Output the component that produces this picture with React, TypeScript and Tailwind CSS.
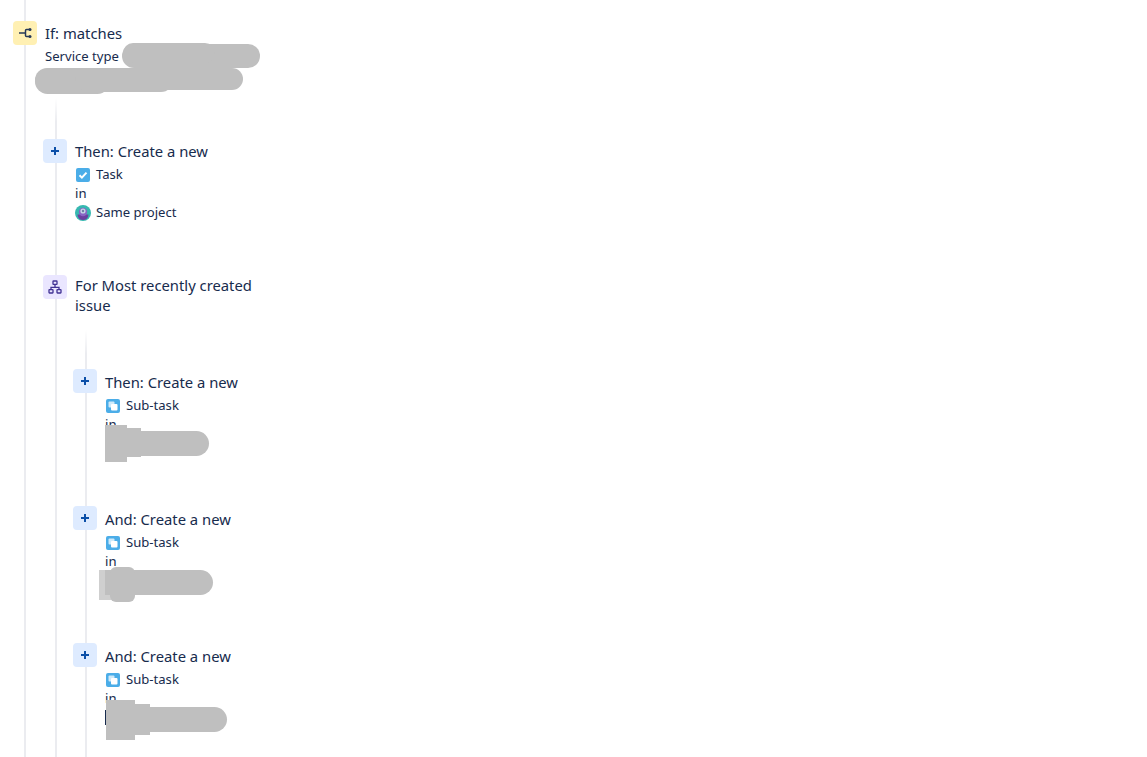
import type { ReactNode } from "react";

function Tile({ bg, children }: { bg: string; children: ReactNode }) {
  return (
    <div className={`flex h-6 w-6 shrink-0 items-center justify-center rounded-[4px] ${bg}`}>
      {children}
    </div>
  );
}

const BranchIcon = () => (
  <svg width="16" height="16" viewBox="0 0 16 16" fill="none" stroke="#253858" strokeWidth="1.500">
    <path d="M2 8h6.500M8.500 8V5.500c0-.7.3-1 1-1h3M8.500 8v2.500c0 .7.3 1 1 1h3" />
    <circle cx="13" cy="4.500" r="1.500" fill="#253858" stroke="none" />
    <circle cx="13" cy="11.500" r="1.500" fill="#253858" stroke="none" />
  </svg>
);

const PlusIcon = () => (
  <svg width="16" height="16" viewBox="0 0 16 16" fill="none" stroke="#0b4fa8" strokeWidth="2">
    <path d="M8 4v8M4 8h8" />
  </svg>
);

const HierarchyIcon = () => (
  <svg width="16" height="16" viewBox="0 0 16 16" fill="none" stroke="#403294" strokeWidth="1.300">
    <rect x="6" y="2" width="4" height="3.400" rx="0.500" />
    <rect x="2" y="10.600" width="4" height="3.400" rx="0.500" />
    <rect x="10" y="10.600" width="4" height="3.400" rx="0.500" />
    <path d="M8 5.400v3M4 10.600V8.400h8v2.200" />
  </svg>
);

const TaskIcon = () => (
  <svg width="14" height="14" viewBox="0 0 14 14" className="ml-px shrink-0">
    <rect width="14" height="14" rx="2" fill="#4bade8" />
    <path d="M3.500 7.200l2.400 2.400 4.600-5" fill="none" stroke="#fff" strokeWidth="2" />
  </svg>
);

const SubtaskIcon = () => (
  <svg width="14" height="14" viewBox="0 0 14 14" className="ml-px shrink-0">
    <rect width="14" height="14" rx="2" fill="#4bade8" />
    <rect x="2.500" y="2.500" width="6" height="6" rx="1" fill="#cfeafa" />
    <rect x="5" y="5" width="6.500" height="6.500" rx="1" fill="#fff" />
  </svg>
);

const ProjectIcon = () => (
  <svg width="16" height="16" viewBox="0 0 16 16" className="shrink-0">
    <circle cx="8" cy="8" r="8" fill="#36b8b0" />
    <path d="M2.500 9.500a5.500 5.500 0 0 0 11 0z" fill="#6b3fa0" />
    <circle cx="8" cy="7" r="4.200" fill="#8a63c4" />
    <circle cx="8" cy="6" r="2.600" fill="#c5d6e8" />
    <circle cx="8" cy="6" r="1.200" fill="#6f7fa8" />
  </svg>
);

function Node({
  tile,
  title,
  top = "mt-[2px]",
  children,
}: {
  tile: ReactNode;
  title: ReactNode;
  top?: string;
  children?: ReactNode;
}) {
  return (
    <div className="-ml-[14px] flex gap-2">
      {tile}
      <div className={`w-[190px] text-[14.800px] leading-5 ${top}`}>
        {title}
        {children && <div className="mt-1 flex flex-col">{children}</div>}
      </div>
    </div>
  );
}

function TypeRow({ icon, label }: { icon: ReactNode; label: string }) {
  return (
    <div className="flex h-[19px] items-center gap-[6px] text-[13.100px] leading-[19px]">
      {icon}
      <span>{label}</span>
    </div>
  );
}

function InRow() {
  return <div className="h-[19px] text-[13.100px] leading-[19px]">in</div>;
}

function Blob({ className }: { className: string }) {
  return <div className={`absolute bg-[#bfbfbf] ${className}`} />;
}

function CreateNode({ verb, blobs }: { verb: string; blobs: ReactNode }) {
  return (
    <Node tile={<Tile bg="bg-[#deebff]"><PlusIcon /></Tile>} title={`${verb}: Create a new`} top="mt-[3px]">
      <TypeRow icon={<SubtaskIcon />} label="Sub-task" />
      <InRow />
      <div className="relative h-5">{blobs}</div>
    </Node>
  );
}

function Fade() {
  return <div className="absolute -left-[2px] top-0 h-6 w-[2px] bg-gradient-to-b from-white to-transparent" />;
}

export default function App() {
  return (
    <div className="h-[757px] overflow-hidden bg-white text-[#172b4d] [font-family:'Noto_Sans','Open_Sans',sans-serif]">
      <div className="ml-6 h-full border-l-2 border-[#ebecf0] pt-[21px]">
        <div className="-ml-[13px] flex gap-2">
          <Tile bg="bg-[#fff0b3]"><BranchIcon /></Tile>
          <div className="mt-[2px] text-[14.800px] leading-5">
            If: matches
            <div className="relative mt-1 h-[19px] text-[13.100px] leading-[19px]">
              Service type
              <Blob className="left-[77px] -top-[3px] h-6 w-[138px] rounded-full" />
              <Blob className="left-[78px] -top-[4px] h-5 w-[92px] rounded-full" />
            </div>
            <div className="relative h-8">
              <Blob className="-left-[10px] top-[3px] h-[25px] w-[75px] rounded-full" />
              <Blob className="-left-[10px] top-[2px] h-6 w-[138px] rounded-full" />
              <Blob className="left-[30px] top-[2px] h-[22px] w-[168px] rounded-full" />
            </div>
          </div>
        </div>

        <div className="relative ml-[29px] h-[660px] border-l-2 border-[#ebecf0] pt-[41px]">
          <Fade />
          <Node tile={<Tile bg="bg-[#deebff]"><PlusIcon /></Tile>} title="Then: Create a new">
            <TypeRow icon={<TaskIcon />} label="Task" />
            <InRow />
            <div className="flex h-[19px] items-center gap-[5px] text-[13.100px] leading-[19px]">
              <ProjectIcon />
              <span>Same project</span>
            </div>
          </Node>

          <div className="mt-[53px]">
            <Node
              tile={<Tile bg="bg-[#eae6ff]"><HierarchyIcon /></Tile>}
              title="For Most recently created issue"
              top="mt-0"
            />
          </div>

          <div className="relative ml-[28px] mt-[15px] border-l-2 border-[#ebecf0] pb-10 pt-[39px]">
            <Fade />
            <CreateNode
              verb="Then"
              blobs={
                <>
                  <Blob className="left-0 -top-[3px] h-[25px] w-[104px] rounded-r-full" />
                  <Blob className="left-0 -top-[9px] h-[37px] w-[22px]" />
                  <Blob className="left-0 -top-[6px] h-[29px] w-[36px]" />
                </>
              }
            />
            <div className="mt-[52px]">
              <CreateNode
                verb="And"
                blobs={
                  <>
                    <Blob className="-left-[6px] -top-[1px] h-[30px] w-[18px] bg-[#cfcfcf]" />
                    <Blob className="left-0 -top-[1px] h-[25px] w-[108px] rounded-r-full" />
                    <Blob className="left-[5px] -top-[4px] h-[35px] w-[25px] rounded-[6px]" />
                  </>
                }
              />
            </div>
            <div className="mt-[52px]">
              <CreateNode
                verb="And"
                blobs={
                  <>
                    <div className="absolute left-0 top-[2px] h-[15px] w-[2px] bg-[#172b4d]" />
                    <Blob className="left-[1px] -top-[1px] h-[25px] w-[121px] rounded-r-full" />
                    <Blob className="left-[1px] -top-[8px] h-10 w-[29px]" />
                    <Blob className="left-[1px] -top-[4px] h-[31px] w-[44px]" />
                  </>
                }
              />
            </div>
          </div>
        </div>
      </div>
    </div>
  );
}
